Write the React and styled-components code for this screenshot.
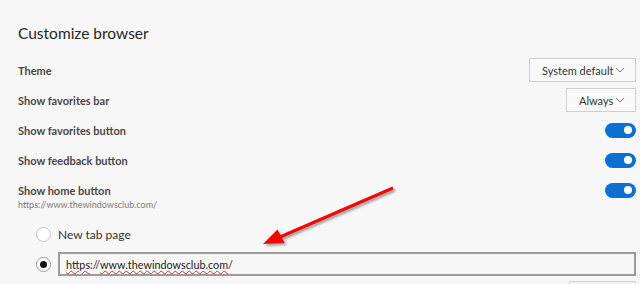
import styled, { createGlobalStyle } from 'styled-components';

const GlobalStyle = createGlobalStyle`
  html, body {
    margin: 0;
    padding: 0;
    background: #f7f7f7;
    overflow: hidden;
  }
  body {
    font-family: Lato, "Noto Sans", sans-serif;
    color: #2b2b2b;
  }
`

const Page = styled.div`
  position: relative;
  width: 640px;
  height: 284px;
  overflow: hidden;
  box-sizing: border-box;
  padding: 22px 4px 0 18px;
`
const Title = styled.h1`
  margin: 0 0 11px;
  font-size: 15.5px;
  line-height: 22px;
  font-weight: 400;
  color: #262626;
`
const Row = styled.div`
  height: 30px;
  display: flex;
  align-items: center;
  justify-content: space-between;
`
const Label = styled.span`
  font-size: 11px;
  font-weight: 700;
  color: #474747;
`
const HomeBlock = styled.div`
  padding-top: 7px;
`
const HomeLine = styled.div`
  height: 16px;
  display: flex;
  align-items: center;
  justify-content: space-between;
`
const SubText = styled.div`
  font-size: 9px;
  line-height: 14px;
  color: #7a7a7a;
`
const Select = styled.div`
  width: ${p => p.width}px;
  height: 24px;
  box-sizing: border-box;
  border: 1px solid #cfcfcf;
  background: #f9f9f9;
  display: flex;
  align-items: center;
  justify-content: space-between;
  padding: 0 10px 0 12px;
  font-size: 11px;
  color: #333;
  white-space: nowrap;
`
const Toggle = styled.div`
  width: 31px;
  height: 15px;
  border-radius: 8px;
  background: #0a70d4;
  display: flex;
  align-items: center;
  justify-content: flex-end;
  padding-right: 4px;
  box-sizing: border-box;
  &::after {
    content: "";
    width: 8px;
    height: 8px;
    border-radius: 50%;
    background: #fff;
  }
`
const Options = styled.div`
  padding: 11px 0 0 18px;
  display: flex;
  flex-direction: column;
  gap: 7px;
`
const OptionRow = styled.div`
  display: flex;
  align-items: center;
  gap: 7px;
  height: ${p => p.tall ? 24 : 22}px;
`
const Radio = styled.span`
  width: 15px;
  height: 15px;
  flex: none;
  box-sizing: border-box;
  border-radius: 50%;
  border: 1px solid ${p => p.checked ? '#9a9a9a' : '#c4c4c4'};
  background: #fff;
  display: flex;
  align-items: center;
  justify-content: center;
  &::after {
    content: "";
    display: ${p => p.checked ? 'block' : 'none'};
    width: 7px;
    height: 7px;
    border-radius: 50%;
    background: #111;
  }
`
const OptionText = styled.span`
  font-size: 12px;
  color: #333;
`
const UrlInput = styled.div`
  flex: 1;
  height: 24px;
  box-sizing: border-box;
  border: 2px solid #9c9c9c;
  background: #f7f7f7;
  display: flex;
  align-items: center;
  padding-left: 6px;
  font-size: 10.8px;
  color: #222;
`
const Misspelled = styled.span`
  text-decoration: underline wavy #e03030;
  text-decoration-thickness: 1px;
  text-underline-offset: 1px;
`
const Footer = styled.div`
  display: flex;
  justify-content: flex-end;
  padding-top: 5px;
`
const SaveButton = styled.div`
  width: 65px;
  height: 24px;
  border: 1px solid #d0d0d0;
  background: #f3f3f3;
`
const Arrow = styled.svg`
  position: absolute;
  left: 0;
  top: 0;
  pointer-events: none;
  filter: drop-shadow(2px 2px 1px rgba(0, 0, 0, 0.35));
`

const Chevron = () => (
  <svg width="10" height="6" viewBox="0 0 10 6">
    <path d="M1 1l4 4 4-4" fill="none" stroke="#777" strokeWidth="1" />
  </svg>
)

const App = () => {
  return (
    <>
      <GlobalStyle />
      <Page>
        <Title>Customize browser</Title>
        <Row>
          <Label>Theme</Label>
          <Select width={107}>System default <Chevron /></Select>
        </Row>
        <Row>
          <Label>Show favorites bar</Label>
          <Select width={70}>Always <Chevron /></Select>
        </Row>
        <Row>
          <Label>Show favorites button</Label>
          <Toggle />
        </Row>
        <Row>
          <Label>Show feedback button</Label>
          <Toggle />
        </Row>
        <HomeBlock>
          <HomeLine>
            <Label>Show home button</Label>
            <Toggle />
          </HomeLine>
          <SubText>https://www.thewindowsclub.com/</SubText>
        </HomeBlock>
        <Options>
          <OptionRow>
            <Radio />
            <OptionText>New tab page</OptionText>
          </OptionRow>
          <OptionRow tall>
            <Radio checked />
            <UrlInput>
              <Misspelled>https</Misspelled>://<Misspelled>www.thewindowsclub.com</Misspelled>/
            </UrlInput>
          </OptionRow>
        </Options>
        <Footer>
          <SaveButton />
        </Footer>
        <Arrow width="640" height="284" viewBox="0 0 640 284">
          <line x1="393" y1="188" x2="280" y2="237" stroke="#ff0000" strokeWidth="3" />
          <polygon points="263,244 277.5,229.5 284.5,243" fill="#ff0000" />
        </Arrow>
      </Page>
    </>
  )
};

export default App;
